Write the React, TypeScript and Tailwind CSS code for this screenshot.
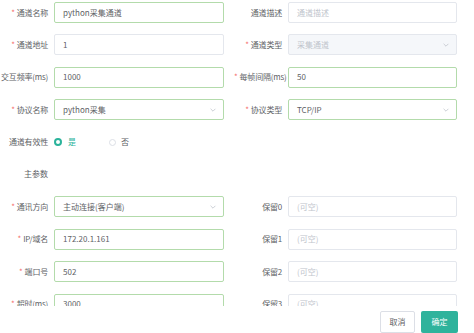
import React from "react";

type Field = {
  label: string;
  required?: boolean;
  value?: string;
  placeholder?: string;
  select?: boolean;
  disabled?: boolean;
  active?: boolean;
};

const rows: [Field, Field][] = [
  [
    { label: "通道名称", required: true, value: "python采集通道", active: true },
    { label: "通道描述", placeholder: "通道描述" },
  ],
  [
    { label: "通道地址", required: true, value: "1" },
    { label: "通道类型", required: true, placeholder: "采集通道", select: true, disabled: true },
  ],
  [
    { label: "交互频率(ms)", value: "1000", active: true },
    { label: "每帧间隔(ms)", required: true, value: "50", active: true },
  ],
  [
    { label: "协议名称", required: true, value: "python采集", select: true, active: true },
    { label: "协议类型", required: true, value: "TCP/IP", select: true, active: true },
  ],
];

const rows2: [Field, Field][] = [
  [
    { label: "通讯方向", required: true, value: "主动连接(客户端)", select: true, active: true },
    { label: "保留0", placeholder: "(可空)" },
  ],
  [
    { label: "IP/域名", required: true, value: "172.20.1.161", active: true },
    { label: "保留1", placeholder: "(可空)" },
  ],
  [
    { label: "端口号", required: true, value: "502", active: true },
    { label: "保留2", placeholder: "(可空)" },
  ],
  [
    { label: "超时(ms)", required: true, value: "3000", active: true },
    { label: "保留3", placeholder: "(可空)" },
  ],
];

function Chevron() {
  return (
    <svg width="8" height="8" viewBox="0 0 10 10" className="shrink-0">
      <path d="M2 3.5 L5 6.5 L8 3.5" fill="none" stroke="#c0c4cc" strokeWidth="1" />
    </svg>
  );
}

function FormItem({ f, wide }: { f: Field; wide?: boolean }) {
  const border = f.active ? "border-[#b3dbab]" : "border-[#e4e7ed]";
  const bg = f.disabled ? "bg-[#f5f7fa]" : "bg-white";
  return (
    <div className="flex items-center h-full">
      <div className="w-[48px] shrink-0 text-right whitespace-nowrap text-[#606266] tracking-[-0.2px]">
        {f.required && <span className="text-[#f56c6c] mr-[2px]">*</span>}
        {f.label}
      </div>
      <div
        className={`ml-[6px] h-full flex items-center justify-between border rounded-[2px] pl-[8px] pr-[6px] ${border} ${bg} ${
          wide ? "w-[170px]" : "w-[169px]"
        }`}
      >
        {f.value ? (
          <span className="text-[#606266]">{f.value}</span>
        ) : (
          <span className="text-[#c0c4cc]">{f.placeholder}</span>
        )}
        {f.select && <Chevron />}
      </div>
    </div>
  );
}

export default function App() {
  return (
    <div
      className="w-[474px] h-[333px] bg-white flex flex-col text-[8px] leading-none overflow-hidden"
      style={{ fontFamily: "'Noto Sans CJK SC', 'Noto Sans', sans-serif" }}
    >
      <div className="h-[306px] overflow-hidden shrink-0 pt-[2px]">
        <div className="grid grid-cols-[224px_240px] gap-x-[10px] auto-rows-[21px] gap-y-[11.4px]">
          {rows.map(([l, r], i) => (
            <React.Fragment key={i}>
              <FormItem f={l} wide />
              <FormItem f={r} />
            </React.Fragment>
          ))}

          {/* 通道有效性 */}
          <div className="flex items-center h-full">
            <div className="w-[48px] shrink-0 text-right whitespace-nowrap text-[#606266] tracking-[-0.2px]">
              通道有效性
            </div>
            <div className="ml-[6px] flex items-center">
              <span className="w-[8px] h-[8px] rounded-full border-[2.5px] border-[#2bb39b] bg-white" />
              <span className="ml-[6px] text-[#2bb39b]">是</span>
              <span className="ml-[33px] w-[7px] h-[7px] rounded-full border border-[#dcdfe6] bg-white" />
              <span className="ml-[5px] text-[#606266]">否</span>
            </div>
          </div>
          <div />

          {/* 主参数 */}
          <div className="flex items-center h-full">
            <div className="w-[48px] shrink-0 text-right whitespace-nowrap text-[#606266]">主参数</div>
          </div>
          <div />

          {rows2.map(([l, r], i) => (
            <React.Fragment key={`b${i}`}>
              <FormItem f={l} wide />
              <FormItem f={r} />
            </React.Fragment>
          ))}
        </div>
      </div>

      <div className="flex-1 flex justify-end items-end pr-[16px] gap-[6px]">
        <button className="w-[35px] h-[22px] border border-[#dcdfe6] rounded-[2px] bg-white text-[#606266] text-[8px]">
          取消
        </button>
        <button className="w-[37px] h-[22px] rounded-[2px] bg-[#2fb39c] text-white text-[8px]">
          确定
        </button>
      </div>
    </div>
  );
}
